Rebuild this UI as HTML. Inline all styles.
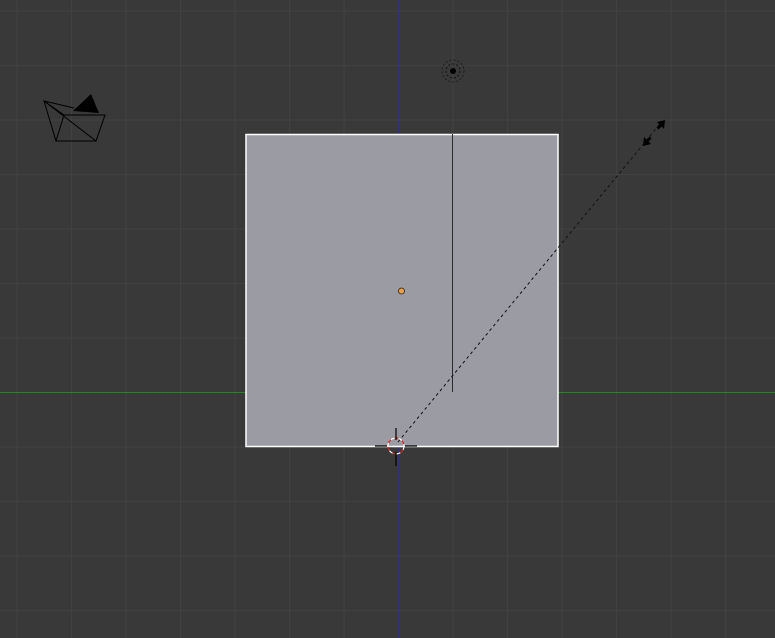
<!DOCTYPE html>
<html><head><style>html,body{margin:0;padding:0;background:#393939;overflow:hidden}svg{display:block}</style></head>
<body>
<svg width="775" height="638" viewBox="0 0 775 638" xmlns="http://www.w3.org/2000/svg">
<defs>
<pattern id="g" x="16.5" y="10.5" width="54.5" height="54.5" patternUnits="userSpaceOnUse">
<path d="M0.5 0V54.5M0 0.5H54.5" stroke="#414141" stroke-width="1.2" fill="none"/>
</pattern>
</defs>
<rect width="775" height="638" fill="#393939"/>
<rect width="775" height="638" fill="url(#g)"/>
<line x1="0" y1="392.5" x2="775" y2="392.5" stroke="#1e8a1e" stroke-width="1"/>
<line x1="398.5" y1="0" x2="398.5" y2="638" stroke="#2a2aa8" stroke-width="1"/>
<rect x="246" y="134.5" width="312" height="312" fill="#9b9ba3" stroke="#ffffff" stroke-width="1.5"/>
<line x1="452.5" y1="134" x2="452.5" y2="392" stroke="#2a2a2a" stroke-width="1"/>
<line x1="398" y1="442" x2="660" y2="124" stroke="#111" stroke-width="1" stroke-dasharray="3,3"/>
<path d="M665 120l-1 9-2.5-2.5-3 3-2-2 3-3-2.5-2.5z" fill="#000"/>
<path d="M643 146l1-9 2.5 2.5 3-3 2 2-3 3 2.5 2.5z" fill="#000"/>
<circle cx="453" cy="71" r="3" fill="#000"/>
<circle cx="453" cy="71" r="7" fill="none" stroke="#111" stroke-dasharray="2,2"/>
<circle cx="453" cy="71" r="11" fill="none" stroke="#111" stroke-dasharray="2,2" opacity=".7"/>
<circle cx="401.5" cy="291" r="3" fill="#f0a040" stroke="#222" stroke-width="0.8"/>
<g stroke="#000" stroke-width="1" fill="none">
<path d="M44 101L56 141H96L105 115H64Z M44 101L96 141 M44 101L74 108 M64 115L56 141"/>
</g>
<path d="M73 111L91 94L99 113Z" fill="#000"/>
<circle cx="396" cy="446" r="8" fill="none" stroke="#fff" stroke-width="1.2" stroke-dasharray="4,4"/>
<circle cx="396" cy="446" r="8" fill="none" stroke="#e02020" stroke-width="1.2" stroke-dasharray="4,4" stroke-dashoffset="4"/>
<path d="M396 428v12M396 452v14M375 446h12M405 446h12" stroke="#000" stroke-width="1.2"/>
</svg>
</body></html>
